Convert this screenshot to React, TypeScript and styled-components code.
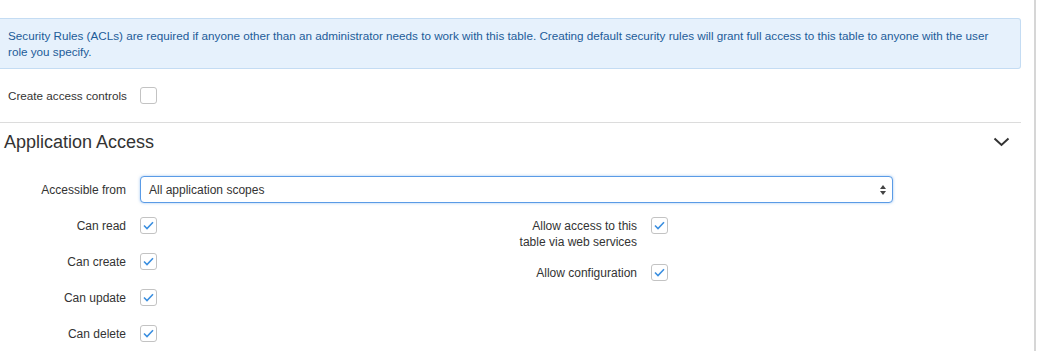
import styled, { createGlobalStyle } from "styled-components";

const GlobalStyle = createGlobalStyle`
  body {
    margin: 0;
    background: #fff;
    font-family: "Liberation Sans", Arial, sans-serif;
    font-size: 12px;
    color: #333;
  }
`;

const Page = styled.div`
  display: flex;
  width: 1038px;
  height: 351px;
  overflow: hidden;
`;

const Main = styled.main`
  width: 1021px;
  padding-top: 18px;
`;

const Rail = styled.div`
  width: 2px;
  margin-left: 13px;
  background: #d6d6d6;
`;

const Alert = styled.div`
  background: #e6f1fc;
  border: 1px solid #c4dcf3;
  border-left: none;
  border-radius: 0 3px 3px 0;
  color: #1d5c99;
  font-size: 11.7px;
  line-height: 16px;
  padding: 9px 10px 8px 8px;
`;

const AccessRow = styled.div`
  display: grid;
  grid-template-columns: 118px auto;
  column-gap: 14px;
  align-items: center;
  padding: 18px 0 18px 8px;
  border-bottom: 1px solid #dcdcdc;
`;

const AccessLabel = styled.span`
  white-space: nowrap;
  font-size: 11.7px;
`;

const SectionHeader = styled.header`
  display: flex;
  align-items: center;
  justify-content: space-between;
  height: 38px;
  padding: 0 11px 0 4px;
`;

const SectionTitle = styled.h2`
  margin: 0;
  font-size: 18px;
  font-weight: normal;
  color: #333;
  line-height: 24px;
`;

const Form = styled.div`
  padding-top: 15px;
  display: flex;
  flex-direction: column;
  gap: 14px;
`;

const Field = styled.div<{ center?: boolean }>`
  display: grid;
  grid-template-columns: 126px auto;
  column-gap: 14px;
  align-items: ${(p) => (p.center ? "center" : "start")};
  min-height: 22px;
`;

const Label = styled.label`
  text-align: right;
  line-height: 16px;
  padding-top: 1px;
`;

const SelectBox = styled.div`
  width: 753px;
  height: 27px;
  box-sizing: border-box;
  display: flex;
  align-items: center;
  justify-content: space-between;
  padding: 0 6px 0 8px;
  border: 1px solid #5a9be6;
  border-radius: 4px;
  box-shadow: 0 0 3px rgba(82, 150, 230, 0.55);
  background: #fff;
`;

const Columns = styled.div`
  display: grid;
  grid-template-columns: 511px 1fr;
`;

const Column = styled.div`
  display: flex;
  flex-direction: column;
  gap: 14px;
`;

const Box = styled.span`
  width: 17px;
  height: 17px;
  box-sizing: border-box;
  border: 1px solid #c3c3c3;
  border-radius: 3px;
  background: #fff;
  display: flex;
  align-items: center;
  justify-content: center;
`;

const Chevron = () => (
  <svg width="17" height="10" viewBox="0 0 17 10">
    <path d="M1.5 1.5 L8.5 8 L15.5 1.5" fill="none" stroke="#333" strokeWidth="2" />
  </svg>
);

const Arrows = () => (
  <svg width="6" height="10" viewBox="0 0 6 10">
    <path d="M3 0 L6 4 L0 4 Z M3 10 L6 6 L0 6 Z" fill="#444" />
  </svg>
);

const Checkbox = ({ checked }: { checked?: boolean }) => (
  <Box>
    {checked && (
      <svg width="11" height="9" viewBox="0 0 11 9">
        <path d="M1 4.5 L4 7.5 L10 1.2" fill="none" stroke="#3b8fe0" strokeWidth="1.6" />
      </svg>
    )}
  </Box>
);

const leftRows = ["Can read", "Can create", "Can update", "Can delete"];

export default function App() {
  return (
    <Page>
      <GlobalStyle />
      <Main>
        <Alert>
          Security Rules (ACLs) are required if anyone other than an administrator needs to work with
          this table. Creating default security rules will grant full access to this table to anyone
          with the user role you specify.
        </Alert>
        <AccessRow>
          <AccessLabel>Create access controls</AccessLabel>
          <Checkbox />
        </AccessRow>
        <SectionHeader>
          <SectionTitle>Application Access</SectionTitle>
          <Chevron />
        </SectionHeader>
        <Form>
          <Field center>
            <Label>Accessible from</Label>
            <SelectBox>
              <span>All application scopes</span>
              <Arrows />
            </SelectBox>
          </Field>
          <Columns>
            <Column>
              {leftRows.map((r) => (
                <Field key={r}>
                  <Label>{r}</Label>
                  <Checkbox checked />
                </Field>
              ))}
            </Column>
            <Column>
              <Field>
                <Label>Allow access to this table via web services</Label>
                <Checkbox checked />
              </Field>
              <Field>
                <Label>Allow configuration</Label>
                <Checkbox checked />
              </Field>
            </Column>
          </Columns>
        </Form>
      </Main>
      <Rail />
    </Page>
  );
}
